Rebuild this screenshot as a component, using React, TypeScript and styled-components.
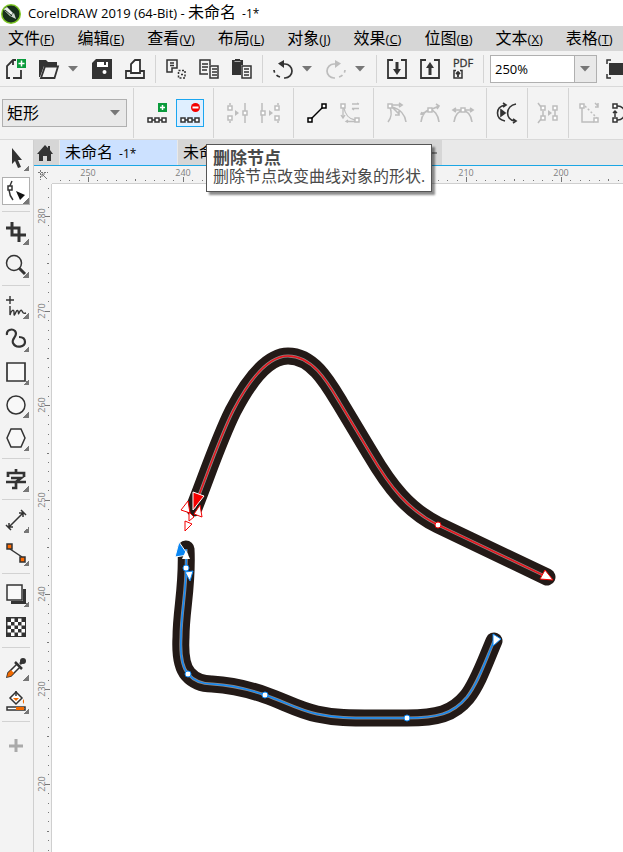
import React, { useEffect, useState } from "react";
import styled, { createGlobalStyle, css } from "styled-components";

const ink = "#333333";
const faint = "#bdbdbd";
const sans = `"Open Sans", "Noto Sans CJK SC", sans-serif`;

const GlobalStyle = createGlobalStyle`
  * { box-sizing: border-box; }
  html, body { margin: 0; overflow: hidden; }
  body { font-family: ${sans}; color: #000; background: #fff; }
  button, select { font-family: inherit; color: inherit; }
  button { padding: 0; border: 0; background: none; }
  svg { display: block; flex: none; }
`;

const Window = styled.div`
  display: flex;
  flex-direction: column;
  height: 100vh;
  background: #f3f3f3;
`;

const TitleBar = styled.header`
  display: flex;
  align-items: center;
  gap: 7px;
  height: 26px;
  background: #fff;
  font-size: 13px;
  line-height: 24px;
  white-space: nowrap;
`;

const DocName = styled.span<{ $small?: boolean }>`
  display: inline-flex;
  align-items: baseline;
  gap: 6px;
  font-size: ${(p) => (p.$small ? 12 : 13)}px;
`;

const Han = styled.span`
  font-size: 16px;
`;

const MenuBar = styled.nav`
  display: flex;
  flex: none;
  gap: 23px;
  height: 25px;
  padding-left: 8px;
  background: #d6d6d6;
  overflow: hidden;
`;

const MenuItem = styled.button`
  flex: none;
  font-size: 16px;
  line-height: 25px;
  white-space: nowrap;
`;

const Accel = styled.span`
  font-size: 13px;
`;

const Toolbar = styled.div`
  display: flex;
  align-items: stretch;
  flex: none;
  height: 36px;
  padding: 4px 0 3px;
  border-bottom: 1px solid #d9d9d9;
  overflow: hidden;
`;

const PropertyBar = styled.div`
  display: flex;
  align-items: stretch;
  flex: none;
  height: 53px;
  padding: 1px 0;
  border-bottom: 1px solid #d9d9d9;
`;

const Group = styled.div<{ $pad?: number; $lead?: number; $gap?: number; $last?: boolean }>`
  display: flex;
  align-items: center;
  flex: none;
  gap: ${(p) => p.$gap ?? 13}px;
  padding: 0 ${(p) => p.$pad ?? 10}px 0 ${(p) => p.$lead ?? p.$pad ?? 10}px;
  border-right: ${(p) => (p.$last ? 0 : 1)}px solid #d4d4d4;
`;

const Split = styled.div`
  display: flex;
  align-items: center;
  gap: 9px;
`;

const IconButton = styled.button`
  display: flex;
`;

const NodeButton = styled.button<{ $active?: boolean }>`
  display: flex;
  align-items: center;
  justify-content: center;
  width: 28px;
  height: 28px;
  border: 1px solid transparent;
  ${(p) =>
    p.$active &&
    css`
      border-color: #1ba6f0;
      background: #dfefff;
    `}
`;

const SelectFrame = styled.label<{ $plain?: boolean }>`
  display: grid;
  grid-template-columns: 1fr 22px;
  flex: none;
  width: ${(p) => (p.$plain ? 125 : 107)}px;
  height: 28px;
  border: 1px solid #b0b0b0;
  background: ${(p) => (p.$plain ? "#e9e9e9" : "#fff")};
`;

const Select = styled.select<{ $large?: boolean }>`
  grid-area: 1 / 1 / 2 / 3;
  appearance: none;
  padding: 0 0 0 4px;
  border: 0;
  background: none;
  font-size: ${(p) => (p.$large ? 16 : 13)}px;
`;

const SelectArrow = styled.span<{ $plain?: boolean }>`
  grid-area: 1 / 2;
  display: flex;
  align-items: center;
  justify-content: center;
  pointer-events: none;
  ${(p) =>
    !p.$plain &&
    css`
      border-left: 1px solid #b0b0b0;
      background: #e9e9e9;
    `}
`;

const TipAnchor = styled.div`
  position: relative;
`;

const Tooltip = styled.div`
  position: absolute;
  left: 30px;
  top: 45px;
  z-index: 5;
  height: 48px;
  padding: 4px 6px;
  border: 1px solid #555;
  background: #fff;
  box-shadow: 3px 3px 2px rgba(0, 0, 0, 0.45);
  color: #4a4a4a;
  font-size: 16px;
  line-height: 18px;
  white-space: nowrap;
`;

const TipTitle = styled.strong`
  display: block;
  font-size: 17px;
`;

const Main = styled.div`
  display: flex;
  flex: 1;
  min-height: 0;
`;

const Toolbox = styled.aside`
  display: flex;
  flex-direction: column;
  gap: 5px;
  flex: none;
  width: 34px;
  padding: 4px 3px 0 2px;
  border-right: 1px solid #cfcfcf;
`;

const Tool = styled.button<{ $active?: boolean }>`
  position: relative;
  display: flex;
  align-items: center;
  justify-content: center;
  flex: none;
  width: 28px;
  height: 28px;
  border: 1px solid ${(p) => (p.$active ? "#b0b0b0" : "transparent")};
  background: ${(p) => (p.$active ? "#fff" : "none")};
`;

const Flyout = styled.i`
  position: absolute;
  right: 0;
  bottom: 0;
  width: 6px;
  height: 6px;
  background: linear-gradient(135deg, transparent 50%, #777 50%);
`;

const ToolRule = styled.hr`
  flex: none;
  width: 28px;
  height: 1px;
  margin: 1px 0;
  border: 0;
  background: #d2d2d2;
`;

const Workspace = styled.main`
  display: flex;
  flex-direction: column;
  flex: 1;
  min-width: 0;
`;

const Tabs = styled.div`
  display: flex;
  flex: none;
  gap: 1px;
  height: 26px;
  background: #e9e9e9;
  border-bottom: 1px solid #1ba6e4;
`;

const HomeTab = styled.button`
  display: flex;
  align-items: center;
  justify-content: center;
  width: 25px;
  padding-right: 3px;
  background: #d6d6d6;
`;

const Tab = styled.button<{ $active?: boolean }>`
  display: flex;
  align-items: center;
  justify-content: space-between;
  width: ${(p) => (p.$active ? 117 : 264)}px;
  padding: 0 5px;
  background: ${(p) => (p.$active ? "#cce1ff" : "#d6d6d6")};
  line-height: 24px;
  white-space: nowrap;
`;

const TabDash = styled.i`
  width: 5px;
  height: 2px;
  background: #8a8a8a;
`;

const Desk = styled.div`
  display: grid;
  grid-template: 18px 1fr / 18px 1fr;
  flex: 1;
  min-height: 0;
`;

const RulerCorner = styled.div`
  display: flex;
  align-items: center;
  justify-content: center;
`;

const RulerTrack = styled.div<{ $vertical?: boolean }>`
  overflow: hidden;
  ${(p) => (p.$vertical ? "border-right" : "border-bottom")}: 1px solid #cfcfcf;
`;

const RulerText = styled.text`
  font-family: "Open Sans", sans-serif;
  font-size: 9px;
  fill: #808080;
  text-anchor: middle;
`;

const Page = styled.div`
  overflow: hidden;
  background: #fff;
`;

const Glyph = styled.svg`
  overflow: visible;
`;

type IconProps = { children: React.ReactNode; color?: string; sw?: number };
const Icon = ({ children, color = ink, sw = 2 }: IconProps) => (
  <Glyph width={20} height={20} viewBox="0 0 20 20" fill="none" stroke={color} strokeWidth={sw} aria-hidden>
    {children}
  </Glyph>
);

const Arrow = () => (
  <svg width="11" height="6" viewBox="0 0 11 6" aria-hidden>
    <path d="M0 0h10L5 5.500z" fill="#777" />
  </svg>
);

const Sq = ({ x, y, s = 4, fill = "#fff" }: { x: number; y: number; s?: number; fill?: string }) => (
  <rect x={x} y={y} width={s} height={s} fill={fill} strokeWidth="1.5" />
);

const NodeRow = () => (
  <g>
    <path d="M1 17h18" strokeWidth="1.500" />
    <Sq x={1} y={15} /><Sq x={8} y={15} /><Sq x={15} y={15} />
  </g>
);

const icons = {
  create: (
    <Icon sw={1.8}>
      <path d="M10 1H7L1 7v12h3M7 19h8v-8M7 1v5" />
      <path d="M11 0h9v9h-9z" fill="#0a9b3b" stroke="none" />
      <path d="M15.500 1.500v6M12.500 4.500h6" stroke="#fff" strokeWidth="1.500" />
    </Icon>
  ),
  open: (
    <Icon>
      <path d="M0 1h7l2 2h9v4H5L1 18H0z" fill={ink} stroke="none" />
      <path d="M6 7.500h13L15.500 19H2z" fill="#f3f3f3" strokeWidth="1.800" />
    </Icon>
  ),
  save: (
    <Icon>
      <path d="M4 0h16v20H0V4z" fill={ink} stroke="none" />
      <path d="M5 3h11v5H5z" fill="#fff" stroke="none" />
      <path d="M13 3v3" />
      <circle cx="12.500" cy="13" r="2" fill="#fff" stroke="none" />
    </Icon>
  ),
  print: (
    <Icon sw={1.8}>
      <path d="M6 12H1v7h18v-7h-4" />
      <path d="M6 14V5l4-4h5v13z" fill="#fff" />
    </Icon>
  ),
  cut: (
    <Icon sw={1.5}>
      <path d="M6 13H1V1h10v8H6zM4 4h4M4 6.500h4" />
      <path d="M12.500 11.500h6.500v7.500h-6.500z" strokeDasharray="2 1.500" /><path d="M15 15.500h2" />
    </Icon>
  ),
  copy: (
    <Icon sw={1.5}>
      <path d="M9 15H1V1h10v5M3 5h6M3 8h6M3 11h5" />
      <path d="M11 7h8v12h-8zM13 10h5M13 13h5M13 16h5" />
    </Icon>
  ),
  paste: (
    <Icon sw={1.5}>
      <path d="M0 1h3V0h5v1h3v5H9v10H0z" fill={ink} stroke="none" />
      <path d="M2.500 2.500h6" stroke="#aaa" strokeWidth="1" />
      <path d="M10 7h9v12h-9zM12 10h5M12 13h5M12 16h5" />
    </Icon>
  ),
  undo: (
    <Icon sw={1.7}>
      <path d="M8 5h4a7 7 0 0 1 0 14h-1" /><path d="M7 18a8 8 0 0 1-6-7" strokeDasharray="4 3" />
      <path d="M5 4.500L11 1v8z" fill={ink} stroke="none" />
    </Icon>
  ),
  redo: (
    <Icon color={faint} sw={1.7}>
      <path d="M12 5H8a7 7 0 0 0 0 14h1" /><path d="M13 18a8 8 0 0 0 6-7" strokeDasharray="4 3" />
      <path d="M15 4.500L9 1v8z" fill={faint} stroke="none" />
    </Icon>
  ),
  importFile: (
    <Icon sw={1.8}>
      <path d="M6 1H1v18h5M14 1h5v18h-5M6 19h8" /><path d="M10 3v8" strokeWidth="3" />
      <path d="M6 10h8l-4 6z" fill={ink} stroke="none" />
    </Icon>
  ),
  exportFile: (
    <Icon sw={1.8}>
      <path d="M6 1H1v18h18V1h-5" /><path d="M10 8v8" strokeWidth="3" />
      <path d="M6 9h8l-4-6z" fill={ink} stroke="none" />
    </Icon>
  ),
  pdf: (
    <Icon sw={1.5}>
      <text x="0" y="8" fill={ink} stroke={ink} strokeWidth="0.300" fontSize="11" fontFamily="Open Sans">PDF</text>
      <path d="M3 11.500H1V19h8v-7.500H7" /><path d="M5 13v5M3 15l2-2 2 2" strokeWidth="1.800" />
    </Icon>
  ),
  full: (
    <Icon>
      <path d="M1 5V1h4M1 15v4h4" strokeWidth="1.500" /><path d="M3 4h17v12H3z" fill={ink} stroke="none" />
    </Icon>
  ),
  addNode: (
    <Icon>
      <NodeRow /><path d="M11 0h9v9h-9z" fill="#0a9b3b" stroke="none" />
      <path d="M15.500 2v5M13 4.500h5" stroke="#fff" strokeWidth="1.500" />
    </Icon>
  ),
  delNode: (
    <Icon>
      <NodeRow /><circle cx="15.500" cy="4.500" r="4.500" fill="#f40000" stroke="none" />
      <path d="M12.500 4.500h6" stroke="#fff" />
    </Icon>
  ),
  join: (
    <Icon color={faint} sw={1.5}>
      <path d="M3 0v2M3 18v2M18 0v20" /><Sq x={1} y={3} /><Sq x={1} y={13} /><Sq x={16} y={8} />
      <path d="M8 7l4 3-4 3z" fill={faint} stroke="none" />
    </Icon>
  ),
  breakCurve: (
    <Icon color={faint} sw={1.5}>
      <path d="M2 0v20M18 0v2M18 18v2" /><Sq x={1} y={8} /><Sq x={15} y={3} /><Sq x={15} y={13} />
      <path d="M9 7l4 3-4 3z" fill={faint} stroke="none" />
    </Icon>
  ),
  toLine: (
    <Icon color="#000" sw={1.5}>
      <path d="M4 16L16 4" /><Sq x={1} y={15} /><Sq x={15} y={1} />
    </Icon>
  ),
  toCurve: (
    <Icon color={faint} sw={1.3}>
      <path d="M3 5v9M1 12l2 3 2-3M4 5c1 6 5 11 11 12M6 18.500h9M8 17l-2 1.500 2 1M12 1h7M17 0l2 1M12 5.500h7M14 7l-2-1.500" /><Sq x={1} y={1} /><Sq x={15} y={15} />
    </Icon>
  ),
  cusp: (
    <Icon color={faint} sw={1.6}>
      <path d="M3 4c2 6 2 10-2 15M5 4c8 2 13 8 14 15M5 2h8M5 4l7 7M12 0l3 2-3 2M12 8v4H8" /><Sq x={1} y={1} />
    </Icon>
  ),
  smooth: (
    <Icon color={faint} sw={1.6}>
      <path d="M1 19C3 3 17 3 19 19M1 11L19 3M16 1l3 2-2 3M2 9l-1 2 3 1" /><Sq x={8} y={5} />
    </Icon>
  ),
  symmetric: (
    <Icon color={faint} sw={1.6}>
      <path d="M1 19C3 4 17 4 19 19M0 7h20M3 5L0 7l3 2M17 5l3 2-3 2" /><Sq x={8} y={5} />
    </Icon>
  ),
  reverse: (
    <Icon sw={1.6}>
      <path d="M8 18C-2 16-2 4 8 2M6 0l3 2-3 2M19 1C8 3 8 17 18 18M16 16l3 2-3 2" />
      <path d="M4 7l4 3-4 3z" fill={ink} />
    </Icon>
  ),
  extend: (
    <Icon color={faint} sw={1.5}>
      <path d="M0 0l3 4M0 20l3-4M5 8v5M17 7v6" /><Sq x={3} y={3} /><Sq x={3} y={13} /><Sq x={15} y={3} /><Sq x={15} y={13} />
      <path d="M10 7l4 3-4 3z" fill={faint} stroke="none" />
    </Icon>
  ),
  extract: (
    <Icon color={faint} sw={1.5}>
      <path d="M3 5v14h12" /><path d="M6 3l12 12" strokeDasharray="2 2" /><path d="M16 0l3 3M19 0v4h-3" />
      <Sq x={1} y={1} /><Sq x={15} y={15} />
    </Icon>
  ),
  close: (
    <Icon sw={1.5}>
      <path d="M5 3c10-1 10 15 0 14M3 8v6M1 10l2-2 2 2" /><Sq x={1} y={1} /><Sq x={1} y={15} />
    </Icon>
  ),
};

const tools: ({ name: string; art: React.ReactNode; active?: boolean; plain?: boolean } | null)[] = [
  { name: "选择", art: <Icon><path d="M6 0v16l3-3 3 7 3-1-3-7h4z" fill={ink} stroke="none" /></Icon> },
  {
    name: "形状", active: true,
    art: <Icon sw={1.5}><path d="M6 0C2 7 2 13 7 19" /><Sq x={2} y={5} /><path d="M10 10l9 4-5 5z" fill="#111" stroke="none" /></Icon>,
  },
  null,
  { name: "裁剪", art: <Icon sw={3}><path d="M6 0v13h14M0 6h13v14" /></Icon> },
  { name: "缩放", art: <Icon sw={1.5}><circle cx="8" cy="8" r="7.500" /><path d="M13 13l6 6" strokeWidth="3" /></Icon> },
  null,
  { name: "手绘", art: <Icon sw={1.4}><path d="M4 0v8M0 4h8M4 10v9c1-5 4-6 4-3s0 4 1 2 2-5 3-3 0 4 1 2 2-4 3-2 1 3 4 2" /></Icon> },
  { name: "艺术笔", art: <Icon sw={2.2}><path d="M1 6C0 1 6-1 9 2c4 5-4 7-2 12 3 6 12 4 12-1 0-4-3-5-6-5" /></Icon> },
  { name: "矩形", art: <Icon sw={1.7}><path d="M1 1h18v18H1z" fill="#f8f8f8" /></Icon> },
  { name: "椭圆形", art: <Icon sw={1.5}><circle cx="10" cy="10" r="9" fill="#f8f8f8" /></Icon> },
  { name: "多边形", art: <Icon sw={1.5}><path d="M5 1h10l4 9-4 9H5l-4-9z" fill="#f8f8f8" /></Icon> },
  null,
  { name: "文本", art: <Icon sw={2.7}><path d="M10 0v4M2 8V4h16v4M5 9h10l-5 4v6H6M0 13h20" /></Icon> },
  null,
  { name: "度量", art: <Icon sw={1.5}><path d="M3 17L17 3M0 15l5 5M15 0l5 5M3 13v4h4M13 3h4v4" /></Icon> },
  {
    name: "连接器",
    art: <Icon sw={1.5}><path d="M4 6l12 8" /><path d="M1 1h5v5H1zM14 14h5v5h-5z" fill="#ff6a00" /></Icon>,
  },
  null,
  { name: "阴影", art: <Icon sw={1.5}><path d="M5 18.500h13.500V5" strokeWidth="3" /><path d="M1 1h15v15H1z" fill="#f8f8f8" /></Icon> },
  {
    name: "透明度", plain: true,
    art: (
      <Icon>
        <path d="M0 0h20v20H0z" fill={ink} stroke="none" />
        {[0, 1, 2, 3, 4].map((r) =>
          [0, 1, 2, 3, 4].filter((c) => (r + c) % 2 === 1).map((c) => (
            <rect key={`${r}${c}`} x={1.5 + c * 3.5} y={1.5 + r * 3.5} width="3.5" height="3.5" fill="#fff" stroke="none" />
          ))
        )}
      </Icon>
    ),
  },
  null,
  {
    name: "颜色滴管",
    art: (
      <Icon sw={1.5}>
        <path d="M1 19l1-4 9-9 3 3-9 9z" fill="#fff" /><path d="M1 19l1-4 3-3 3 3-3 3z" fill="#f26a00" stroke="none" />
        <path d="M9 4l7 7M14 6l3-3" strokeWidth="2.500" /><circle cx="17" cy="3" r="3" fill={ink} stroke="none" />
      </Icon>
    ),
  },
  {
    name: "交互式填充",
    art: (
      <Icon sw={1.5}>
        <path d="M10 1l6 6-6 6-6-6z" fill="#fff" /><path d="M10 0v5" /><path d="M7 7h6l-3 3z" fill="#f26a00" stroke="none" />
        <path d="M18 8c-2 2-1 4 0 5z" fill="#f26a00" stroke="none" />
        <path d="M1 16h18v3H1z" fill="#fff" /><path d="M10 16h8v3h-8z" fill="#f26a00" stroke="none" />
      </Icon>
    ),
  },
  null,
  { name: "快速自定义", plain: true, art: <Icon color="#aaa" sw={3}><path d="M10 7v13M3 14h14" /></Icon> },
];

const menus = [
  ["文件", "F"], ["编辑", "E"], ["查看", "V"], ["布局", "L"], ["对象", "J"],
  ["效果", "C"], ["位图", "B"], ["文本", "X"], ["表格", "T"],
];

const STEP = 94.6;

const useViewport = () => {
  const [size, setSize] = useState({ w: window.innerWidth, h: window.innerHeight });
  useEffect(() => {
    const update = () => setSize({ w: window.innerWidth, h: window.innerHeight });
    window.addEventListener("resize", update);
    return () => window.removeEventListener("resize", update);
  }, []);
  return size;
};

const Ruler = ({ vertical, origin, first, length }: { vertical?: boolean; origin: number; first: number; length: number }) => {
  const before = Math.floor((origin * 10) / STEP);
  const tickCount = Math.max(0, Math.floor(((length - origin) * 10) / STEP) + before + 1);
  const labelCount = Math.max(0, Math.floor((length - 12 - origin) / STEP) + 1);
  const ticks = Array.from({ length: tickCount }, (_, i) => i - before);
  const labels = Array.from({ length: labelCount }, (_, i) => i);
  return (
    <svg width={vertical ? 17 : "100%"} height={vertical ? "100%" : 17} aria-hidden>
      {ticks.map((i) => {
        const at = Math.round(origin + (i * STEP) / 10);
        const len = i % 10 === 0 ? 5 : i % 5 === 0 ? 2 : 1;
        const inset = i % 10 === 0 ? 0 : 1;
        return vertical ? (
          <rect key={i} x={16 - len - inset} y={at} width={len} height="1" fill="#777" />
        ) : (
          <rect key={i} x={at} y={16 - len - inset} width="1" height={len} fill="#777" />
        );
      })}
      {labels.map((i) => {
        const at = Math.round(origin + i * STEP);
        return vertical ? (
          <RulerText key={i} transform={`translate(11 ${at}) rotate(-90)`}>{first - i * 10}</RulerText>
        ) : (
          <RulerText key={i} x={at} y={10}>{first - i * 10}</RulerText>
        );
      })}
    </svg>
  );
};

const upper = "M194 508C206 478 219 439 233 411C245 388 265 356 288 356C313 356 328 383 340 403L370 453C390 487 408 510 438 525L547 577";
const lower = "M186 549C188 585 181 610 181 637C180 655 182 667 188 674C195 682 204 684 212 684C230 685 245 688 265 695C283 701 298 710 317 714C335 718 350 718 375 718H407C437 718 453 714 467 697C478 683 485 662 494 641";

const Artwork = () => (
  <svg width="571" height="668" viewBox="52 184 571 668" fill="none" role="img" aria-label="曲线">
    {[[upper, "#e8141c"], [lower, "#1088f5"]].map(([d, color]) => (
      <g key={color}>
        <path d={d} stroke="#231a17" strokeWidth="17" strokeLinecap="round" />
        <path d={d} stroke="#8f8886" strokeWidth="3" />
        <path d={d} stroke={color} strokeWidth="1.500" />
      </g>
    ))}
    <g stroke="#f40000" fill="#fff">
      <path d="M188 501L190 513L181 510zM200 505L202 517L194 514zM189 512L194 517L189 521zM185 521L192 524L185 531z" />
      <path d="M193 492L204 496L193 510z" fill="#f40000" stroke="#fff" />
      <circle cx="438" cy="525" r="3" />
      <path d="M545 570L553 580L540 579z" />
    </g>
    <g stroke="#0a86f2" fill="#fff">
      <path d="M179 542L188 555L175 557z" fill="#0a86f2" stroke="#fff" />
      <path d="M186 550L190 559L182 559z" stroke="none" />
      <circle cx="186" cy="568" r="3" />
      <path d="M185 572L193 571L190 581z" />
      <circle cx="188" cy="674" r="3" /><circle cx="265" cy="695" r="3" /><circle cx="407" cy="718" r="3" />
      <path d="M493 634L501 639L493 646z" />
    </g>
  </svg>
);

const Logo = () => (
  <svg width="21" height="22" viewBox="0 0 21 22" aria-hidden>
    <circle cx="11" cy="12" r="10" fill="#7cc623" />
    <circle cx="11" cy="12" r="8.500" fill="#17301b" />
    <path d="M4 7l3-2 6 6-3 3-5-5z" fill="#e9eee9" /><path d="M10 14l4-3 2 6z" fill="#cfd6cf" />
    <path d="M5 8l7 6" stroke="#17301b" />
  </svg>
);

type K = keyof typeof icons;
const Btn = ({ k, name }: { k: K; name: string }) => <IconButton aria-label={name}>{icons[k]}</IconButton>;
const Node = ({ k, name }: { k: K; name: string }) => <NodeButton aria-label={name}>{icons[k]}</NodeButton>;

export default function App() {
  const { w, h } = useViewport();
  return (
    <Window>
      <GlobalStyle />
      <TitleBar>
        <Logo />
        <span>CorelDRAW 2019 (64-Bit) - <DocName $small><Han>未命名</Han>-1*</DocName></span>
      </TitleBar>
      <MenuBar>
        {menus.map(([label, key]) => (
          <MenuItem key={key}>{label}<Accel>(<u>{key}</u>)</Accel></MenuItem>
        ))}
      </MenuBar>
      <Toolbar>
        <Group $lead={6}>
          <Btn k="create" name="新建" />
          <Split><Btn k="open" name="打开" /><IconButton aria-label="最近打开"><Arrow /></IconButton></Split>
          <Btn k="save" name="保存" /><Btn k="print" name="打印" />
        </Group>
        <Group><Btn k="cut" name="剪切" /><Btn k="copy" name="复制" /><Btn k="paste" name="粘贴" /></Group>
        <Group>
          <Split><Btn k="undo" name="撤销" /><IconButton aria-label="撤销列表"><Arrow /></IconButton></Split>
          <Split><Btn k="redo" name="重做" /><IconButton aria-label="重做列表"><Arrow /></IconButton></Split>
        </Group>
        <Group><Btn k="importFile" name="导入" /><Btn k="exportFile" name="导出" /><Btn k="pdf" name="发布为 PDF" /></Group>
        <Group $lead={6} $gap={9} $last>
          <SelectFrame>
            <Select aria-label="缩放级别"><option>250%</option></Select>
            <SelectArrow><Arrow /></SelectArrow>
          </SelectFrame>
          <Btn k="full" name="全屏预览" />
        </Group>
      </Toolbar>
      <PropertyBar>
        <Group $lead={2} $pad={6}>
          <SelectFrame $plain>
            <Select $large aria-label="选取模式"><option>矩形</option></Select>
            <SelectArrow $plain><Arrow /></SelectArrow>
          </SelectFrame>
        </Group>
        <Group $pad={9} $gap={5}>
          <Node k="addNode" name="添加节点" />
          <TipAnchor>
            <NodeButton $active aria-label="删除节点">{icons.delNode}</NodeButton>
            <Tooltip role="tooltip">
              <TipTitle>删除节点</TipTitle>
              删除节点改变曲线对象的形状.
            </Tooltip>
          </TipAnchor>
        </Group>
        <Group $pad={9} $gap={5}><Node k="join" name="连接两个节点" /><Node k="breakCurve" name="断开曲线" /></Group>
        <Group $pad={9} $gap={5}><Node k="toLine" name="转换为线条" /><Node k="toCurve" name="转换为曲线" /></Group>
        <Group $pad={9} $gap={5}>
          <Node k="cusp" name="尖突节点" /><Node k="smooth" name="平滑节点" /><Node k="symmetric" name="对称节点" />
        </Group>
        <Group $pad={6}><Node k="reverse" name="反转方向" /></Group>
        <Group $pad={6}><Node k="extend" name="延长曲线使之闭合" /></Group>
        <Group $pad={6} $gap={5} $last><Node k="extract" name="提取子路径" /><Node k="close" name="闭合曲线" /></Group>
      </PropertyBar>
      <Main>
        <Toolbox>
          {tools.map((t, i) =>
            t ? (
              <Tool key={i} $active={t.active} aria-label={t.name}>{t.art}{!t.plain && <Flyout />}</Tool>
            ) : (
              <ToolRule key={i} />
            )
          )}
        </Toolbox>
        <Workspace>
          <Tabs>
            <HomeTab aria-label="主页">
              <svg width="16" height="16" viewBox="0 0 16 16" aria-hidden>
                <path d="M8 0l3 3V1h2v4l3 4h-2v7h-4v-5H6v5H2V9H0z" fill={ink} />
              </svg>
            </HomeTab>
            <Tab $active><DocName $small><Han>未命名</Han>-1*</DocName></Tab>
            <Tab><DocName $small><Han>未命名</Han>-1*</DocName><TabDash /></Tab>
          </Tabs>
          <Desk>
            <RulerCorner>
              <svg width="10" height="10" viewBox="0 0 10 10" stroke="#777" fill="none" aria-hidden>
                <path d="M0 2.500h10M2.500 0v10" strokeDasharray="2 1" /><path d="M4 4l5 5M4 7V4h3" />
              </svg>
            </RulerCorner>
            <RulerTrack><Ruler origin={36} first={250} length={w - 52} /></RulerTrack>
            <RulerTrack $vertical><Ruler vertical origin={32} first={280} length={h - 184} /></RulerTrack>
            <Page><Artwork /></Page>
          </Desk>
        </Workspace>
      </Main>
    </Window>
  );
}
